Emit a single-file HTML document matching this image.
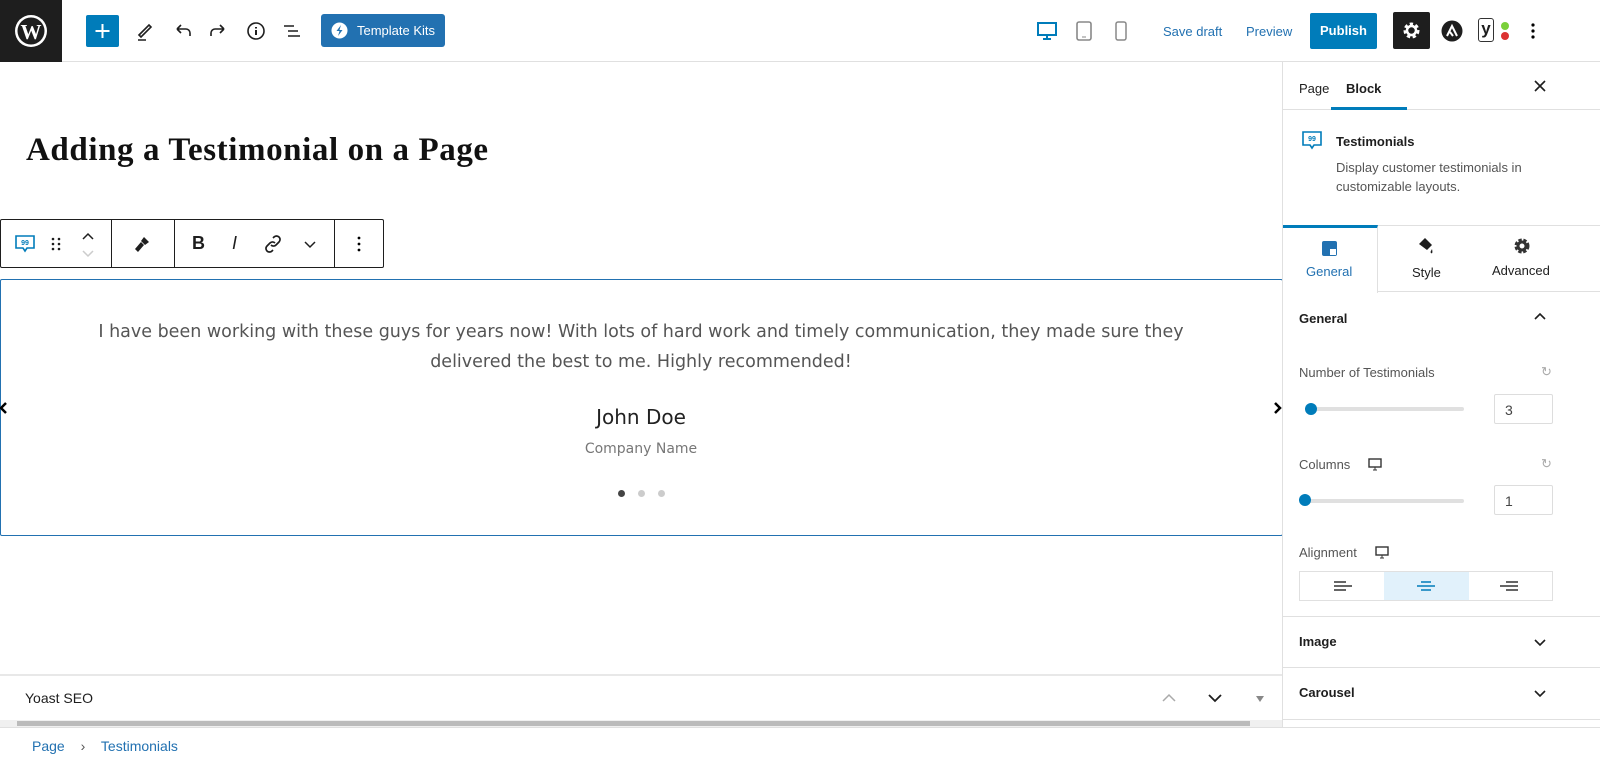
<!DOCTYPE html>
<html><head><meta charset="utf-8"><style>
*{box-sizing:border-box;margin:0;padding:0}
body{width:1600px;height:775px;overflow:hidden;background:#fff;font-family:"Liberation Sans",sans-serif;color:#1e1e1e;position:relative}
.a{position:absolute}
.top{left:0;top:0;width:1600px;height:62px;border-bottom:1px solid #e0e0e0}
.ic{stroke:#1e1e1e;fill:none;stroke-width:1.6}
.side{left:1282px;top:62px;width:318px;height:665px;border-left:1px solid #e0e0e0}
.lbl{font-size:13px;color:#555}
.row{left:1283px;width:317px;border-top:1px solid #e0e0e0;height:51px;font-size:13px;font-weight:bold;padding:17px 16px}
</style></head><body>
<div class="a top">
 <div class="a" style="left:0;top:0;width:62px;height:62px;background:#1e1e1e">
  <svg class="a" style="left:13px;top:13px" width="36" height="36" viewBox="0 0 36 36"><circle cx="18" cy="18" r="16" fill="#fff"/><circle cx="18" cy="18" r="13.5" fill="#1e1e1e"/><text x="18" y="26" font-family="Liberation Serif" font-weight="bold" font-size="21" fill="#fff" text-anchor="middle">W</text></svg>
 </div>
 <div class="a" style="left:86px;top:15px;width:33px;height:32px;background:#007cba;border-radius:2px"><svg width="33" height="32"><path d="M16.5 9v14M9.5 16h14" stroke="#fff" stroke-width="2"/></svg></div>
 <svg class="a" style="left:134px;top:20px" width="22" height="22"><path class="ic" d="M5 15 L15 5 L17 7 L7 17Z" fill="#1e1e1e"/><path d="M4 20h8" stroke="#1e1e1e" stroke-width="1.5"/></svg>
 <svg class="a" style="left:172px;top:20px" width="22" height="22"><path class="ic" d="M5 9h9a4 4 0 0 1 4 4v3M5 9l4-4M5 9l4 4"/></svg>
 <svg class="a" style="left:207px;top:20px" width="22" height="22"><path class="ic" d="M17 9H8a4 4 0 0 0-4 4v3M17 9l-4-4M17 9l-4 4"/></svg>
 <svg class="a" style="left:245px;top:20px" width="22" height="22"><circle class="ic" cx="11" cy="11" r="8"/><path d="M11 10v5M11 7v1.5" stroke="#1e1e1e" stroke-width="2"/></svg>
 <svg class="a" style="left:281px;top:20px" width="22" height="22"><path d="M3 6h10M7 11h10M7 16h12" stroke="#1e1e1e" stroke-width="1.6"/></svg>
 <div class="a" style="left:321px;top:14px;width:124px;height:33px;background:#2271b1;border-radius:3px;color:#fff;font-size:13px;padding:9px 0 0 36px">Template Kits
  <svg class="a" style="left:10px;top:8px" width="17" height="17"><circle cx="8.5" cy="8.5" r="8" fill="#fff"/><path d="M10 3L5.5 9h3L7 14l4.5-6h-3z" fill="#2271b1"/></svg></div>
 <svg class="a" style="left:1036px;top:21px" width="22" height="20"><rect x="2" y="2" width="18" height="12" fill="none" stroke="#007cba" stroke-width="2"/><path d="M7 18h8M11 14v4" stroke="#007cba" stroke-width="2"/></svg>
 <svg class="a" style="left:1075px;top:20px" width="18" height="22"><rect x="2" y="2" width="14" height="18" rx="2" fill="none" stroke="#888" stroke-width="1.6"/><path d="M7 17h4" stroke="#888"/></svg>
 <svg class="a" style="left:1114px;top:20px" width="14" height="22"><rect x="2" y="2" width="10" height="18" rx="2" fill="none" stroke="#888" stroke-width="1.5"/></svg>
 <div class="a" style="left:1163px;top:24px;font-size:13px;color:#2271b1">Save draft</div>
 <div class="a" style="left:1246px;top:24px;font-size:13px;color:#2271b1">Preview</div>
 <div class="a" style="left:1310px;top:13px;width:67px;height:36px;background:#007cba;border-radius:2px;color:#fff;font-size:13px;font-weight:bold;text-align:center;line-height:36px">Publish</div>
 <div class="a" style="left:1393px;top:12px;width:37px;height:37px;background:#1e1e1e;border-radius:2px"><svg width="37" height="37"><circle cx="18.5" cy="18.5" r="6" fill="none" stroke="#fff" stroke-width="4" stroke-dasharray="3 2.3"/><circle cx="18.5" cy="18.5" r="4.5" fill="none" stroke="#fff" stroke-width="2.5"/></svg></div>
 <svg class="a" style="left:1441px;top:20px" width="22" height="22"><circle cx="11" cy="11" r="10.5" fill="#1e1e1e"/><path d="M6 16L11 6l5 10M9 12l3 4" stroke="#fff" stroke-width="2" fill="none"/></svg>
 <div class="a" style="left:1478px;top:18px;width:16px;height:24px;border:1.5px solid #333;border-radius:3px;font-size:17px;line-height:20px;text-align:center;font-weight:bold">y</div>
 <div class="a" style="left:1501px;top:22px;width:8px;height:8px;border-radius:50%;background:#7ad03a"></div>
 <div class="a" style="left:1501px;top:32px;width:8px;height:8px;border-radius:50%;background:#dc3232"></div>
 <svg class="a" style="left:1527px;top:20px" width="12" height="22"><circle cx="6" cy="5" r="1.6"/><circle cx="6" cy="11" r="1.6"/><circle cx="6" cy="17" r="1.6"/></svg>
</div>

<div class="a" style="left:26px;top:132px;font-family:'Liberation Serif',serif;font-weight:bold;font-size:33px;letter-spacing:0.6px;color:#111">Adding a Testimonial on a Page</div>

<div class="a" style="left:0;top:219px;width:384px;height:49px;border:1px solid #1e1e1e;border-radius:2px">
 <svg class="a" style="left:13px;top:13px" width="22" height="22"><path d="M2 3h18v12h-7l-2 3-2-3H2z" fill="none" stroke="#007cba" stroke-width="1.6"/><text x="11" y="12" font-size="7" font-weight="bold" fill="#007cba" text-anchor="middle">99</text></svg>
 <svg class="a" style="left:48px;top:15px" width="14" height="18"><g fill="#1e1e1e"><circle cx="4" cy="4" r="1.3"/><circle cx="10" cy="4" r="1.3"/><circle cx="4" cy="9" r="1.3"/><circle cx="10" cy="9" r="1.3"/><circle cx="4" cy="14" r="1.3"/><circle cx="10" cy="14" r="1.3"/></g></svg>
 <svg class="a" style="left:78px;top:10px" width="18" height="30"><path d="M4 9l5-5 5 5" stroke="#1e1e1e" stroke-width="1.5" fill="none"/><path d="M4 21l5 5 5-5" stroke="#ccc" stroke-width="1.5" fill="none"/></svg>
 <div class="a" style="left:110px;top:0;width:1px;height:47px;background:#1e1e1e"></div>
 <svg class="a" style="left:130px;top:13px" width="22" height="22"><path d="M13 4l5 5-4 3-4-4z M10 9l3 3-6 7-3-3z" fill="#1e1e1e"/></svg>
 <div class="a" style="left:173px;top:0;width:1px;height:47px;background:#1e1e1e"></div>
 <div class="a" style="left:191px;top:13px;font-weight:bold;font-size:18px">B</div>
 <div class="a" style="left:231px;top:13px;font-style:italic;font-size:18px">I</div>
 <svg class="a" style="left:260px;top:12px" width="24" height="24"><path d="M10 13a3.5 3.5 0 0 0 5 0l3-3a3.5 3.5 0 0 0-5-5l-1 1M14 11a3.5 3.5 0 0 0-5 0l-3 3a3.5 3.5 0 0 0 5 5l1-1" stroke="#1e1e1e" stroke-width="1.7" fill="none"/></svg>
 <svg class="a" style="left:301px;top:18px" width="16" height="12"><path d="M3 4l5 5 5-5" stroke="#1e1e1e" stroke-width="1.5" fill="none"/></svg>
 <div class="a" style="left:333px;top:0;width:1px;height:47px;background:#1e1e1e"></div>
 <svg class="a" style="left:352px;top:14px" width="12" height="20"><circle cx="6" cy="4" r="1.4"/><circle cx="6" cy="10" r="1.4"/><circle cx="6" cy="16" r="1.4"/></svg>
</div>

<div class="a" style="left:0;top:279px;width:1283px;height:257px;border:1.5px solid #2271b1;border-radius:2px;font-family:'DejaVu Sans',sans-serif">
 <div class="a" style="left:0;top:37px;width:1280px;text-align:center;font-size:17.5px;line-height:30px;color:#555">I have been working with these guys for years now! With lots of hard work and timely communication, they made sure they<br>delivered the best to me. Highly recommended!</div>
 <div class="a" style="left:0;top:125px;width:1280px;text-align:center;font-size:20px;color:#222">John Doe</div>
 <div class="a" style="left:0;top:161px;width:1280px;text-align:center;font-size:14px;color:#777">Company Name</div>
 <div class="a" style="left:617px;top:210px;width:7px;height:7px;border-radius:50%;background:#444"></div>
 <div class="a" style="left:637px;top:210px;width:7px;height:7px;border-radius:50%;background:#ccc"></div>
 <div class="a" style="left:657px;top:210px;width:7px;height:7px;border-radius:50%;background:#ccc"></div>
 <svg class="a" style="left:-3px;top:120px" width="12" height="16"><path d="M8 3l-5 5 5 5" stroke="#000" stroke-width="2.5" fill="none"/></svg>
 <svg class="a" style="left:1271px;top:120px" width="12" height="16"><path d="M3 3l5 5-5 5" stroke="#000" stroke-width="2.5" fill="none"/></svg>
</div>

<div class="a" style="left:0;top:674px;width:1282px;height:46px;border-top:2px solid #e8e8e8;font-size:14px;padding:14px 25px">Yoast SEO
 <svg class="a" style="left:1160px;top:16px" width="18" height="12"><path d="M3 9l6-6 6 6" stroke="#aaa" stroke-width="1.5" fill="none"/></svg>
 <svg class="a" style="left:1206px;top:16px" width="18" height="12"><path d="M3 3l6 6 6-6" stroke="#1e1e1e" stroke-width="1.8" fill="none"/></svg>
 <svg class="a" style="left:1255px;top:19px" width="10" height="8"><path d="M1 1h8l-4 6z" fill="#888"/></svg>
</div>
<div class="a" style="left:0;top:720px;width:1282px;height:7px;background:#f0f0f0"><div class="a" style="left:17px;top:1px;width:1233px;height:5px;background:#bbb"></div></div>
<div class="a" style="left:0;top:727px;width:1600px;height:48px;border-top:1px solid #e0e0e0;font-size:14px;color:#2271b1;padding:10px 32px">Page <span style="margin:0 12px;color:#555">›</span> Testimonials</div>

<div class="a side">
 <div class="a" style="left:0;top:0;width:317px;height:48px;border-bottom:1px solid #e0e0e0;font-size:13px">
  <div class="a" style="left:16px;top:19px">Page</div>
  <div class="a" style="left:63px;top:19px;font-weight:bold">Block</div>
  <div class="a" style="left:48px;top:45px;width:76px;height:3px;background:#007cba"></div>
  <svg class="a" style="left:250px;top:17px" width="14" height="14"><path d="M2 2l10 10M12 2L2 12" stroke="#1e1e1e" stroke-width="1.6"/></svg>
 </div>
 <svg class="a" style="left:18px;top:68px" width="22" height="22"><path d="M2 2h18v13h-7l-2 3-2-3H2z" fill="none" stroke="#007cba" stroke-width="1.6"/><text x="11" y="11" font-size="7" font-weight="bold" fill="#007cba" text-anchor="middle">99</text></svg>
 <div class="a" style="left:53px;top:72px;font-size:13px;font-weight:bold">Testimonials</div>
 <div class="a" style="left:53px;top:96px;font-size:13px;color:#555;line-height:19px">Display customer testimonials in<br>customizable layouts.</div>
 <div class="a" style="left:0;top:163px;width:317px;height:67px;border-bottom:1px solid #e0e0e0;border-top:1px solid #e0e0e0"></div>
 <div class="a" style="left:0;top:163px;width:95px;height:68px;border-top:3px solid #007cba;border-right:1px solid #e0e0e0;background:#fff">
  <div class="a" style="left:39px;top:13px;width:15px;height:15px;background:#2271b1;border-radius:2px"><div class="a" style="left:8px;top:8px;width:6px;height:6px;background:#fff"></div></div>
  <div class="a" style="left:23px;top:36px;font-size:13px;color:#2271b1">General</div>
 </div>
 <svg class="a" style="left:133px;top:173px" width="20" height="22"><path d="M3 9l6-6 7 7-5 5z" fill="#1e1e1e"/><path d="M16 14c-1 2-2 3-1 4s2 0 1-4z" fill="#1e1e1e"/></svg>
 <div class="a" style="left:129px;top:203px;font-size:13px">Style</div>
 <svg class="a" style="left:229px;top:174px" width="20" height="20"><circle cx="10" cy="10" r="5.5" fill="none" stroke="#333" stroke-width="4" stroke-dasharray="3 1.5"/><circle cx="10" cy="10" r="4" fill="none" stroke="#333" stroke-width="3"/></svg>
 <div class="a" style="left:209px;top:201px;font-size:13px">Advanced</div>
 <div class="a" style="left:16px;top:249px;font-size:13px;font-weight:bold">General</div>
 <svg class="a" style="left:250px;top:249px" width="14" height="10"><path d="M2 8l5-5 5 5" stroke="#1e1e1e" stroke-width="1.6" fill="none"/></svg>
 <div class="a lbl" style="left:16px;top:303px">Number of Testimonials</div>
 <div class="a lbl" style="left:258px;top:302px;color:#aaa">↻</div>
 <div class="a" style="left:28px;top:345px;width:153px;height:4px;background:#e0e0e0;border-radius:2px"></div>
 <div class="a" style="left:22px;top:341px;width:12px;height:12px;border-radius:50%;background:#007cba"></div>
 <div class="a" style="left:211px;top:332px;width:59px;height:30px;border:1px solid #ddd;border-radius:2px;font-size:14px;padding:7px 10px;color:#444">3</div>
 <div class="a lbl" style="left:16px;top:395px">Columns</div>
 <svg class="a" style="left:85px;top:396px" width="14" height="13"><rect x="1" y="1" width="12" height="8" fill="none" stroke="#333" stroke-width="1.4"/><path d="M5 12h4M7 9v3" stroke="#333"/></svg>
 <div class="a lbl" style="left:258px;top:394px;color:#aaa">↻</div>
 <div class="a" style="left:22px;top:437px;width:159px;height:4px;background:#e0e0e0;border-radius:2px"></div>
 <div class="a" style="left:16px;top:432px;width:12px;height:12px;border-radius:50%;background:#007cba"></div>
 <div class="a" style="left:211px;top:423px;width:59px;height:30px;border:1px solid #ddd;border-radius:2px;font-size:14px;padding:7px 10px;color:#444">1</div>
 <div class="a lbl" style="left:16px;top:483px">Alignment</div>
 <svg class="a" style="left:92px;top:484px" width="14" height="13"><rect x="1" y="1" width="12" height="8" fill="none" stroke="#333" stroke-width="1.4"/><path d="M5 12h4M7 9v3" stroke="#333"/></svg>
 <div class="a" style="left:16px;top:509px;width:254px;height:30px;border:1px solid #e0e0e0"></div>
 <div class="a" style="left:101px;top:510px;width:85px;height:28px;background:#e1f1fb"></div>
 <svg class="a" style="left:49px;top:515px" width="20" height="18"><path d="M2 5h12M2 9h18M2 13h12" stroke="#333" stroke-width="1.5"/></svg>
 <svg class="a" style="left:133px;top:515px" width="20" height="18"><path d="M5 5h10M1 9h18M5 13h10" stroke="#007cba" stroke-width="1.5"/></svg>
 <svg class="a" style="left:217px;top:515px" width="20" height="18"><path d="M6 5h12M0 9h18M6 13h12" stroke="#333" stroke-width="1.5"/></svg>
</div>
<div class="a row" style="top:616px">Image<svg class="a" style="left:250px;top:21px" width="14" height="10"><path d="M2 2l5 5 5-5" stroke="#1e1e1e" stroke-width="1.6" fill="none"/></svg></div>
<div class="a row" style="top:667px">Carousel<svg class="a" style="left:250px;top:21px" width="14" height="10"><path d="M2 2l5 5 5-5" stroke="#1e1e1e" stroke-width="1.6" fill="none"/></svg></div>
<div class="a" style="left:1283px;top:719px;width:317px;height:1px;background:#e0e0e0"></div>
</body></html>
